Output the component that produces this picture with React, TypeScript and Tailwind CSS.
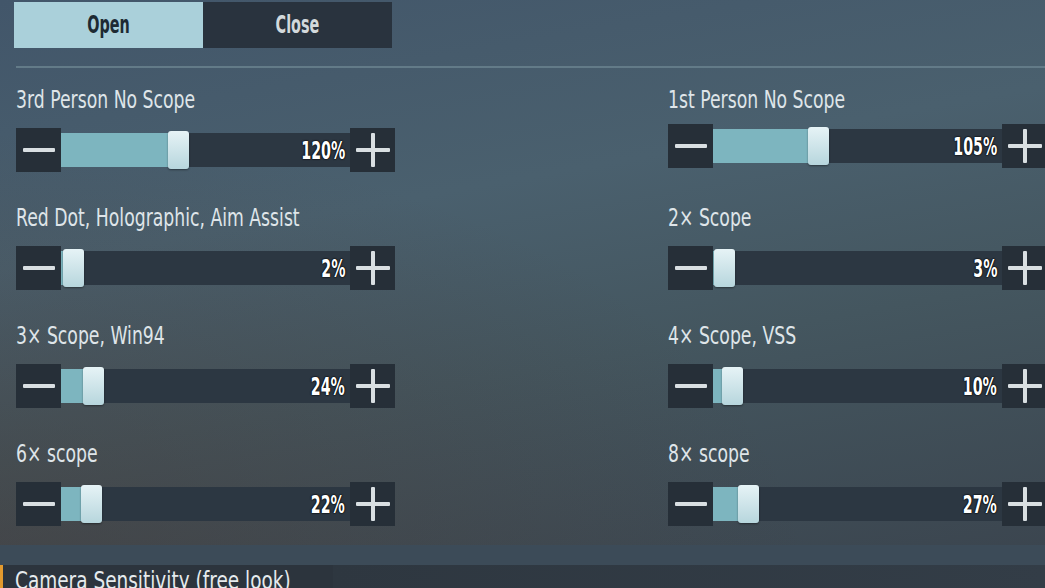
import React from "react";

const font = { fontFamily: '"DejaVu Sans","Liberation Sans",sans-serif' };

function Minus() {
  return (
    <div className="flex h-full w-[45px] shrink-0 items-center justify-center bg-[#262f38]">
      <div className="h-[4px] w-[32px] rounded-[1px] bg-[#d9dfe2]" />
    </div>
  );
}

function Plus() {
  return (
    <div className="relative flex h-full w-[45px] shrink-0 items-center justify-center bg-[#262f38]">
      <div className="absolute h-[4px] w-[34px] rounded-[1px] bg-[#d9dfe2]" />
      <div className="absolute h-[34px] w-[4px] rounded-[1px] bg-[#d9dfe2]" />
    </div>
  );
}

function Slider({ label, value, thumb, lift = 0 }: { label: string; value: string; thumb: number; lift?: number }) {
  return (
    <div className="flex flex-col">
      <div className="h-[24px] whitespace-nowrap text-[25px] leading-[24px] text-[#dfe5e9]" style={font}>
        <span className="inline-block origin-left scale-x-[0.69]">{label}</span>
      </div>
      <div className="flex h-[44px] w-[379px] items-stretch" style={{ marginTop: 16 - lift, marginBottom: lift }}>
        <Minus />
        <div className="relative my-[5px] flex flex-1 items-center justify-end bg-[#2c3742] pr-[5px]">
          <div className="absolute left-0 top-0 h-full bg-[#7db5bf]" style={{ width: thumb + 10 }} />
          <div
            className="absolute top-[-2px] h-[38px] w-[21px] rounded-[3px] bg-[linear-gradient(180deg,#e6f3f6,#b7d6dd)] shadow-[0_1px_2px_rgba(0,0,0,0.4)]"
            style={{ left: thumb }}
          />
          <span
            className="relative inline-block origin-right scale-x-[0.57] text-[25px] font-bold leading-none text-white [text-shadow:0_0_2px_#000,0_0_2px_#000,0_0_1px_#000]"
            style={font}
          >
            {value}
          </span>
        </div>
        <Plus />
      </div>
    </div>
  );
}

export default function App() {
  return (
    <div className="relative h-[588px] w-[1045px] overflow-hidden bg-[linear-gradient(170deg,#42566a_0%,#4a606e_35%,#44565f_60%,#3a434d_100%)]">
      <div className="absolute inset-0 bg-[radial-gradient(ellipse_at_0%_100%,rgba(70,55,50,0.45),transparent_55%)]" />
      <div className="relative flex flex-col">
        <div className="ml-[14px] mt-[2px] flex h-[46px] w-[378px]" style={font}>
          <div className="flex flex-1 items-center justify-center bg-[#aad0da] text-[24px] font-bold text-[#1d2a33]">
            <span className="inline-block scale-x-[0.6]">Open</span>
          </div>
          <div className="flex flex-1 items-center justify-center bg-[#29333e] text-[24px] font-bold text-[#d3d9dc]">
            <span className="inline-block scale-x-[0.6]">Close</span>
          </div>
        </div>
        <div className="ml-[16px] mt-[18px] h-[2px] bg-[#637b88]" />
        <div className="ml-[16px] mt-[20px] grid grid-cols-[652px_379px] gap-y-[34px]">
          <Slider label="3rd Person No Scope" value="120%" thumb={107} />
          <Slider label="1st Person No Scope" value="105%" thumb={95} lift={4} />
          <Slider label="Red Dot, Holographic, Aim Assist" value="2%" thumb={2} />
          <Slider label="2× Scope" value="3%" thumb={1} />
          <Slider label="3× Scope, Win94" value="24%" thumb={22} />
          <Slider label="4× Scope, VSS" value="10%" thumb={9} />
          <Slider label="6× scope" value="22%" thumb={20} />
          <Slider label="8× scope" value="27%" thumb={25} />
        </div>
      </div>
      <div className="absolute bottom-[23px] left-0 right-0 h-[20px] bg-[#3c4b58]" />
      <div className="absolute bottom-0 left-0 right-0 flex h-[23px] bg-[#2c343d]">
        <div className="h-full w-[3px] bg-[#e39a2e]" />
        <div className="relative h-full w-[330px] overflow-hidden">
          <span
            className="absolute left-[12px] top-[4px] inline-block origin-left scale-x-[0.77] whitespace-nowrap text-[24px] leading-[24px] text-[#e6ebee]"
            style={font}
          >
            Camera Sensitivity (free look)
          </span>
        </div>
        <div className="h-full flex-1 bg-[linear-gradient(100deg,#2e3740,#333d47)]" />
      </div>
    </div>
  );
}
